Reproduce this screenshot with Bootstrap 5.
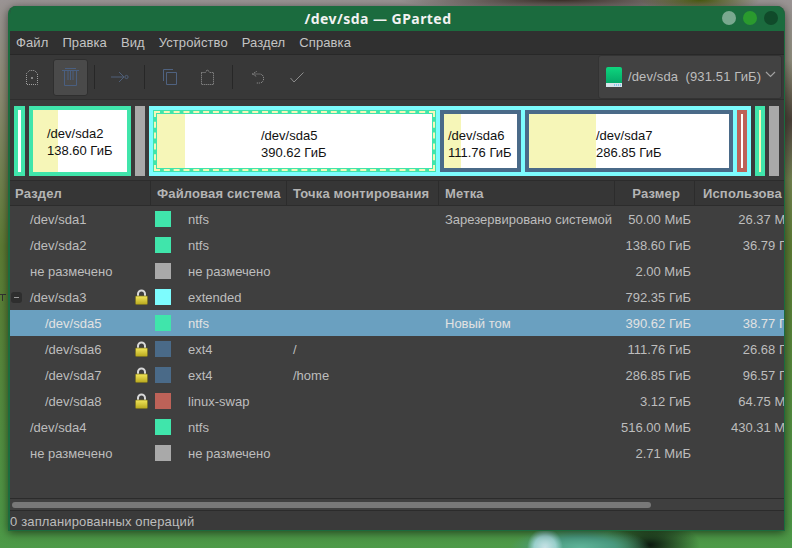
<!DOCTYPE html>
<html lang="ru">
<head>
<meta charset="utf-8">
<title>GParted</title>
<link href="https://cdn.jsdelivr.net/npm/bootstrap@5.3.0/dist/css/bootstrap.min.css" rel="stylesheet">
<style>
html,body{height:100%;margin:0;overflow:hidden}
body{font-family:"Liberation Sans",Arial,sans-serif;font-size:13px;color:#bdbdbd;width:792px;height:548px;position:relative;
background:
 radial-gradient(ellipse 18px 20px at 545px 548px,#c8e2e6 0,#9ad0cc 60%,transparent 100%),
 radial-gradient(ellipse 70px 22px at 580px 548px,#5fb49a 0,#4a9a80 50%,transparent 100%),
 radial-gradient(ellipse 50px 24px at 650px 545px,#0c1a10 0,transparent 100%),
 radial-gradient(ellipse 60px 12px at 700px 0,#4a5a10 0,transparent 100%),
 radial-gradient(ellipse 160px 10px at 560px 0,#3b2f28 0,transparent 100%),
 radial-gradient(ellipse 60px 60px at 792px 120px,#4a4038 0,transparent 100%),
 linear-gradient(180deg,#9a9494 0,#8a8a70 18%,#5d7c34 45%,#4d9a48 100%);}
.gp-win{position:absolute;left:8px;top:6px;width:777px;height:525px;background:#3f3f3f;border:1px solid #1b6b3e;border-left-width:2px;border-top:0;border-radius:8px 8px 0 0;box-shadow:0 2px 10px rgba(0,0,0,.55);overflow:hidden}
.gp-title{height:25px;background:#1b6b3e;color:#f2f2f2;font-family:"Noto Sans",sans-serif;font-weight:700;font-size:14px;position:relative}
.gp-title-text{position:absolute;left:0;right:0;top:3px;line-height:19px;text-align:center;padding-right:38px;letter-spacing:.45px}
.gp-dot{width:14px;height:14px;border-radius:50%}
.gp-btns{position:absolute;right:6px;top:5px;gap:7px}
.gp-menu{height:24px;background:#303030;border-bottom:1px solid #282828;padding-left:6px;gap:14px;color:#c4c4c4;letter-spacing:.1px}
.gp-tool{height:45px;background:#383838;border-bottom:1px solid #2e2e2e}
.gp-tb{height:37px;margin-top:4px;flex:none}
.gp-w43{width:43px}.gp-w35{width:35px}.gp-w36{width:36px}.gp-w41{width:41px}
.gp-paste{width:37px;margin-left:2px}
.gp-tb-on{background:#4a4a4a;border:1px solid #2f2f2f;border-radius:3px}
.gp-sep{width:1px;height:24px;background:#272727;margin:10px 7px 0 6px;flex:none}
.gp-combo{width:184px;height:44px;background:#424242;border:1px solid #333;border-radius:3px;padding-left:7px;margin-right:2px;color:#bdbdbd}
.gp-cname{white-space:pre;margin-left:6px;letter-spacing:.12px}
.gp-map{height:81px;background:#3a3a3a;padding:6px 0 0 4px;gap:4px;border-bottom:1px solid #2c2c2c}
.gp-seg{height:70px;flex:none;position:relative;border:4px solid #40e5ab;background:#fff;color:#111;line-height:17px}
.gp-fill{position:absolute;left:0;top:0;bottom:0;background:#f6f6b8}
.gp-lbl{position:absolute;top:15px;white-space:nowrap;text-align:left}
.gp-l14{left:14px}.gp-l104{left:104px}.gp-l4{left:4px}.gp-l67{left:67px}
.gp-ext{border-color:#7dfcfe;background:#7dfcfe;gap:4px;padding:0;height:70px}
.gp-in{height:62px}
.gp-in .gp-lbl{top:13px}
.gp-ext4{border-color:#4a6a88}
.gp-swap{border-color:#bd6258}
.gp-un{background:#a9a9a9;border:0}
.gp-dash{position:absolute;inset:-3px;border:2px dashed #f6f6b8;pointer-events:none}
.gp-head{height:25px;background:#363636;border-bottom:1px solid #2c2c2c;font-weight:700;color:#b4b4b4;letter-spacing:.15px}
.gp-c1{width:141px;flex:none;padding-left:5px;position:relative}
.gp-c2{width:136px;flex:none;padding-left:6px}
.gp-c3{width:152px;flex:none;padding-left:6px}
.gp-c4{width:176px;flex:none;padding-left:6px}
.gp-c5{width:80px;flex:none;padding-right:4px;text-align:right}
.gp-c6{width:106px;flex:none;text-align:right;white-space:nowrap}
.gp-head .gp-c5{padding-right:14px}
.gp-head .gp-c6{text-align:left;padding-left:8px;width:90px;overflow:hidden}
.gp-head>div{height:24px;line-height:25px;border-right:1px solid #2c2c2c}
.gp-head>div:last-child{border-right:0}
.gp-rows{height:293px}
.gp-row{height:26px;line-height:27px;white-space:nowrap}
.gp-sel{background:#6aa0c0;color:#e2e2e2}
.gp-part{padding-left:20px}
.gp-sub{padding-left:35px}
.gp-sw{width:16px;height:16px;display:block;margin:5px 17px 0 0}
.gp-cf{display:flex;align-items:flex-start;padding-left:4px}
.gp-lock{position:absolute;left:124px;top:5px;width:15px;height:16px}
.gp-exp{position:absolute;left:1px;top:8px;width:11px;height:11px;background:#2e2e2e;border-radius:3px}
.gp-exp::after{content:"";position:absolute;left:3px;top:5px;width:5px;height:1px;background:#999}
.gp-tick{position:absolute;left:0;top:294px;width:6px;height:7px;border-top:1px solid #333}
.gp-tick::after{content:"";position:absolute;left:2px;top:0;width:1px;height:6px;background:#333}
.gp-scroll{height:13px;background:#3f3f3f;border-top:1px solid #2b2b2b;border-bottom:1px solid #2b2b2b;padding:3px 0 3px 2px}
.gp-thumb{width:639px;height:6px;background:#787878;border-radius:3px}
.gp-status{height:19px;background:#3a3a3a;line-height:21px;letter-spacing:.15px}
</style>
</head>
<body>
<div class="gp-tick"></div>
<div class="gp-win d-flex flex-column">
  <div class="gp-title">
    <div class="gp-title-text">/dev/sda — GParted</div>
    <div class="gp-btns d-flex">
      <span class="gp-dot" style="background:#7aa88f"></span>
      <span class="gp-dot" style="background:#2a9a2e"></span>
      <span class="gp-dot" style="background:#104a2a"></span>
    </div>
  </div>
  <div class="gp-menu d-flex align-items-center">
    <span>Файл</span><span>Правка</span><span>Вид</span><span>Устройство</span><span>Раздел</span><span>Справка</span>
  </div>
  <div class="gp-tool d-flex">
    <div class="gp-tb gp-w43 d-flex align-items-center justify-content-center">
      <svg width="12" height="15" viewBox="0 0 12 15" fill="none" stroke="#a0a0a0" stroke-dasharray="1 1"><path d="M.5 3.500l3-3h5l3 3v11H.5z"/><path d="M5 8h2M6 7v2" stroke-dasharray="none"/></svg>
    </div>
    <div class="gp-tb gp-w35 gp-tb-on d-flex align-items-center justify-content-center">
      <svg width="17" height="18" viewBox="0 0 17 18" fill="none" stroke="#4a5f80"><path d="M3 .5h11M0 2.500h17M2.500 3v14.500h12V3M6 3v9M8.500 3v9M11 3v9"/></svg>
    </div>
    <div class="gp-sep"></div>
    <div class="gp-tb gp-w36 d-flex align-items-center justify-content-center">
      <svg width="18" height="12" viewBox="0 0 18 12" fill="none" stroke="#4f5f78"><path d="M0 6h12M8 1l5 5-5 5"/><circle cx="15.500" cy="6" r="1.600"/></svg>
    </div>
    <div class="gp-sep"></div>
    <div class="gp-tb gp-w35 d-flex align-items-center justify-content-center">
      <svg width="14" height="16" viewBox="0 0 14 16" fill="none" stroke="#4f6280"><path d="M.5 12V.5h9.500"/><path d="M3.500 3.500h10v12h-10z"/></svg>
    </div>
    <div class="gp-tb gp-paste d-flex align-items-center justify-content-center">
      <svg width="13" height="16" viewBox="0 0 13 16" fill="none" stroke="#9a9a9a" stroke-dasharray="1 1"><path d="M.5 3.500h4l2-3 2 3h4v12H.5z"/></svg>
    </div>
    <div class="gp-sep"></div>
    <div class="gp-tb gp-w36 d-flex align-items-center justify-content-center">
      <svg width="13" height="13" viewBox="0 0 13 13" fill="none" stroke="#9a9a9a" stroke-dasharray="1 1"><path d="M4.500.5L.5 3l4 2.500M.5 3h7c5.500 0 5.500 9 0 9H4"/></svg>
    </div>
    <div class="gp-tb gp-w41 d-flex align-items-center justify-content-center">
      <svg width="14" height="11" viewBox="0 0 14 11" fill="none" stroke="#8c8c8c"><path d="M.5 6l3.500 4L13.500 .5"/></svg>
    </div>
    <div class="gp-combo d-flex align-items-center ms-auto">
      <svg width="16" height="20" viewBox="0 0 16 20"><defs><linearGradient id="gpd" x1="0" y1="0" x2="0" y2="1"><stop offset="0" stop-color="#0ed67e"/><stop offset="1" stop-color="#04a868"/></linearGradient></defs><path d="M2 0h12a2 2 0 0 1 2 2v14H0V2a2 2 0 0 1 2-2z" fill="url(#gpd)"/><rect y="16" width="16" height="4" fill="#d6e4ea"/><path d="M8 18h7" stroke="#3aa8e8" stroke-dasharray="1 1"/></svg>
      <span class="gp-cname">/dev/sda  (931.51 ГиБ)</span>
      <svg width="11" height="7" viewBox="0 0 11 7" fill="none" stroke="#a0a0a0" stroke-width="1.200" class="ms-1 mb-1"><path d="M1 1l4.500 4.500L10 1"/></svg>
    </div>
  </div>
  <div class="gp-map d-flex">
    <div class="gp-seg" style="width:11px"></div>
    <div class="gp-seg" style="width:102px"><div class="gp-fill" style="width:25px"></div><div class="gp-lbl gp-l14">/dev/sda2<br>138.60 ГиБ</div></div>
    <div class="gp-seg gp-un" style="width:10px"></div>
    <div class="gp-seg gp-ext d-flex" style="width:602px">
      <div class="gp-seg gp-in" style="width:283px"><div class="gp-fill" style="width:28px"></div><div class="gp-dash"></div><div class="gp-lbl gp-l104">/dev/sda5<br>390.62 ГиБ</div></div>
      <div class="gp-seg gp-in gp-ext4" style="width:81px"><div class="gp-fill" style="width:17px"></div><div class="gp-lbl gp-l4">/dev/sda6<br>111.76 ГиБ</div></div>
      <div class="gp-seg gp-in gp-ext4" style="width:208px"><div class="gp-fill" style="width:67px"></div><div class="gp-lbl gp-l67">/dev/sda7<br>286.85 ГиБ</div></div>
      <div class="gp-seg gp-in gp-swap" style="width:10px"></div>
    </div>
    <div class="gp-seg" style="width:10px"><div class="gp-fill" style="width:2px"></div></div>
    <div class="gp-seg gp-un" style="width:10px"></div>
  </div>
  <div class="gp-head d-flex">
    <div class="gp-c1">Раздел</div><div class="gp-c2">Файловая система</div><div class="gp-c3">Точка монтирования</div><div class="gp-c4">Метка</div><div class="gp-c5">Размер</div><div class="gp-c6">Использова</div>
  </div>
  <div class="gp-rows">
    <div class="gp-row d-flex"><div class="gp-c1 gp-part">/dev/sda1</div><div class="gp-c2 gp-cf"><i class="gp-sw" style="background:#40e5ab"></i>ntfs</div><div class="gp-c3"></div><div class="gp-c4">Зарезервировано системой</div><div class="gp-c5">50.00 МиБ</div><div class="gp-c6">26.37 МиБ</div></div>
    <div class="gp-row d-flex"><div class="gp-c1 gp-part">/dev/sda2</div><div class="gp-c2 gp-cf"><i class="gp-sw" style="background:#40e5ab"></i>ntfs</div><div class="gp-c3"></div><div class="gp-c4"></div><div class="gp-c5">138.60 ГиБ</div><div class="gp-c6">36.79 ГиБ</div></div>
    <div class="gp-row d-flex"><div class="gp-c1 gp-part">не размечено</div><div class="gp-c2 gp-cf"><i class="gp-sw" style="background:#a9a9a9"></i>не размечено</div><div class="gp-c3"></div><div class="gp-c4"></div><div class="gp-c5">2.00 МиБ</div><div class="gp-c6"></div></div>
    <div class="gp-row d-flex"><div class="gp-c1 gp-part"><span class="gp-exp"></span>/dev/sda3<svg class="gp-lock" viewBox="0 0 14 16"><use href="#gplock"/></svg></div><div class="gp-c2 gp-cf"><i class="gp-sw" style="background:#7dfcfe"></i>extended</div><div class="gp-c3"></div><div class="gp-c4"></div><div class="gp-c5">792.35 ГиБ</div><div class="gp-c6"></div></div>
    <div class="gp-row gp-sel d-flex"><div class="gp-c1 gp-sub">/dev/sda5</div><div class="gp-c2 gp-cf"><i class="gp-sw" style="background:#40e5ab"></i>ntfs</div><div class="gp-c3"></div><div class="gp-c4">Новый том</div><div class="gp-c5">390.62 ГиБ</div><div class="gp-c6">38.77 ГиБ</div></div>
    <div class="gp-row d-flex"><div class="gp-c1 gp-sub">/dev/sda6<svg class="gp-lock" viewBox="0 0 14 16"><use href="#gplock"/></svg></div><div class="gp-c2 gp-cf"><i class="gp-sw" style="background:#4a6a88"></i>ext4</div><div class="gp-c3">/</div><div class="gp-c4"></div><div class="gp-c5">111.76 ГиБ</div><div class="gp-c6">26.68 ГиБ</div></div>
    <div class="gp-row d-flex"><div class="gp-c1 gp-sub">/dev/sda7<svg class="gp-lock" viewBox="0 0 14 16"><use href="#gplock"/></svg></div><div class="gp-c2 gp-cf"><i class="gp-sw" style="background:#4a6a88"></i>ext4</div><div class="gp-c3">/home</div><div class="gp-c4"></div><div class="gp-c5">286.85 ГиБ</div><div class="gp-c6">96.57 ГиБ</div></div>
    <div class="gp-row d-flex"><div class="gp-c1 gp-sub">/dev/sda8<svg class="gp-lock" viewBox="0 0 14 16"><use href="#gplock"/></svg></div><div class="gp-c2 gp-cf"><i class="gp-sw" style="background:#bd6258"></i>linux-swap</div><div class="gp-c3"></div><div class="gp-c4"></div><div class="gp-c5">3.12 ГиБ</div><div class="gp-c6">64.75 МиБ</div></div>
    <div class="gp-row d-flex"><div class="gp-c1 gp-part">/dev/sda4</div><div class="gp-c2 gp-cf"><i class="gp-sw" style="background:#40e5ab"></i>ntfs</div><div class="gp-c3"></div><div class="gp-c4"></div><div class="gp-c5">516.00 МиБ</div><div class="gp-c6">430.31 МиБ</div></div>
    <div class="gp-row d-flex"><div class="gp-c1 gp-part">не размечено</div><div class="gp-c2 gp-cf"><i class="gp-sw" style="background:#a9a9a9"></i>не размечено</div><div class="gp-c3"></div><div class="gp-c4"></div><div class="gp-c5">2.71 МиБ</div><div class="gp-c6"></div></div>
  </div>
  <div class="gp-scroll"><div class="gp-thumb"></div></div>
  <div class="gp-status">0 запланированных операций</div>
</div>
<svg width="0" height="0" class="position-absolute"><defs>
  <linearGradient id="gplg" x1="0" y1="0" x2="0" y2="1"><stop offset="0" stop-color="#f2e65a"/><stop offset="1" stop-color="#b8a81e"/></linearGradient>
  <symbol id="gplock" viewBox="0 0 14 16"><path d="M3.500 8V5a3.500 3.500 0 0 1 7 0v3" fill="none" stroke="#d8d8d8" stroke-width="2"/><rect x="1" y="7" width="12" height="8.500" rx="1" fill="url(#gplg)" stroke="#7c7420" stroke-width=".7"/></symbol>
</defs></svg>
<script src="https://cdn.jsdelivr.net/npm/bootstrap@5.3.0/dist/js/bootstrap.bundle.min.js"></script>
</body>
</html>
